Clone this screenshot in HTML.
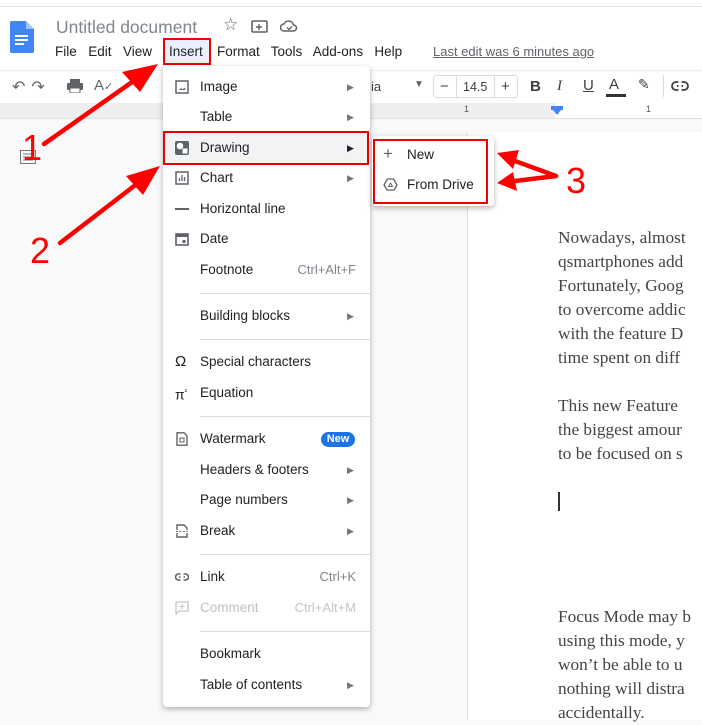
<!DOCTYPE html>
<html><head><meta charset="utf-8"><style>
*{margin:0;padding:0;box-sizing:border-box}
body{width:702px;height:720px;overflow:hidden;position:relative;background:#f8f9fa;font-family:"Liberation Sans",Arial,sans-serif;color:#3c4043}
.abs{position:absolute}
.menuitem{position:absolute;left:0;width:207px;height:30px;font-size:13.5px;line-height:30px;color:#202124}
.menuitem .t{position:absolute;left:37px}
.menuitem .ar{position:absolute;left:184px;font-size:9px;color:#777}
.menuitem .sc{position:absolute;right:14px;color:#80868b;font-size:13px}
.menuitem .ic{position:absolute;left:12px;top:8px;width:14px;height:14px}
.sep{position:absolute;left:37px;width:170px;height:1px;background:#dadce0}
.doc{position:absolute;left:558px;font-family:"Liberation Serif",Georgia,serif;font-size:17.3px;line-height:24px;color:#444;white-space:nowrap}
</style></head><body>
<div class="abs" style="left:0;top:0;width:702px;height:70px;background:#fff"></div>
<div class="abs" style="left:0;top:6px;width:702px;height:1px;background:#e5e5e5"></div>
<svg class="abs" style="left:10px;top:21px" width="24" height="32" viewBox="0 0 24 32"><path d="M2 0h14l8 8v22a2 2 0 0 1-2 2H2a2 2 0 0 1-2-2V2a2 2 0 0 1 2-2z" fill="#4285f4"/><path d="M16 0v8h8z" fill="#a1c2fa"/><rect x="5" y="14" width="13" height="2" fill="#fff"/><rect x="5" y="18" width="13" height="2" fill="#fff"/><rect x="5" y="22" width="9" height="2" fill="#fff"/></svg>
<div class="abs" style="left:56px;top:17px;font-size:17.5px;color:#80868b">Untitled document</div>
<div class="abs" style="left:223px;top:15px;font-size:17px;color:#5f6368">☆</div>
<svg class="abs" style="left:251px;top:19px" width="17" height="14"><rect x="1" y="2" width="15" height="11" rx="1" fill="none" stroke="#5f6368" stroke-width="1.6"/><path d="M8 5v6M5 8h6" stroke="#5f6368" stroke-width="1.4"/></svg>
<svg class="abs" style="left:280px;top:19px" width="18" height="14"><path d="M4 12a3.5 3.5 0 0 1 0-7 5 5 0 0 1 9.5 1 3 3 0 0 1 0 6z" fill="none" stroke="#5f6368" stroke-width="1.5"/><path d="M7 8.5l2 2 3-3" fill="none" stroke="#5f6368" stroke-width="1.3"/></svg>
<div class="abs" style="left:55px;top:44px;font-size:13.5px;color:#202124;word-spacing:2px">File&nbsp; Edit&nbsp; View</div>
<div class="abs" style="left:163px;top:38px;width:48px;height:27px;background:#e8f0fe;border:2px solid #e00"></div>
<div class="abs" style="left:169px;top:44px;font-size:13.5px;color:#202124">Insert</div>
<div class="abs" style="left:217px;top:44px;font-size:13.5px;color:#202124">Format&nbsp;&nbsp; Tools&nbsp;&nbsp; Add-ons&nbsp;&nbsp; Help</div>
<div class="abs" style="left:433px;top:44px;font-size:13px;color:#5f6368;text-decoration:underline">Last edit was 6 minutes ago</div>
<div class="abs" style="left:0;top:70px;width:702px;height:33px;background:#fff;border-top:1px solid #eee"></div>
<div class="abs" style="left:12px;top:77px;font-size:16px;color:#5f6368;letter-spacing:6px">↶↷</div>
<svg class="abs" style="left:67px;top:79px" width="16" height="14"><rect x="3" y="0" width="10" height="4" fill="#5f6368"/><rect x="0" y="4" width="16" height="7" rx="1" fill="#5f6368"/><rect x="3" y="9" width="10" height="5" fill="#fff" stroke="#5f6368"/></svg>
<div class="abs" style="left:94px;top:77px;font-size:15px;color:#5f6368">A<span style="font-size:11px">✓</span></div>
<div class="abs" style="left:371px;top:79px;font-size:13px;color:#3c4043">ia</div>
<div class="abs" style="left:414px;top:79px;font-size:10px;color:#5f6368">▼</div>
<div class="abs" style="left:433px;top:75px;width:85px;height:23px;border:1px solid #dadce0;border-radius:3px"></div>
<div class="abs" style="left:456px;top:75px;width:1px;height:23px;background:#dadce0"></div>
<div class="abs" style="left:494px;top:75px;width:1px;height:23px;background:#dadce0"></div>
<div class="abs" style="left:440px;top:78px;font-size:15px;color:#3c4043">−</div>
<div class="abs" style="left:463px;top:80px;font-size:12.5px;color:#3c4043">14.5</div>
<div class="abs" style="left:501px;top:78px;font-size:15px;color:#3c4043">+</div>
<div class="abs" style="left:530px;top:78px;font-size:15px;font-weight:bold;color:#3c4043">B</div>
<div class="abs" style="left:557px;top:78px;font-size:15px;font-style:italic;color:#3c4043;font-family:'Liberation Serif',serif">I</div>
<div class="abs" style="left:583px;top:77px;font-size:15px;color:#3c4043;text-decoration:underline">U</div>
<div class="abs" style="left:609px;top:76px;font-size:15px;color:#3c4043">A</div>
<div class="abs" style="left:606px;top:94px;width:20px;height:3px;background:#333"></div>
<div class="abs" style="left:638px;top:76px;font-size:14px;color:#3c4043">✎</div>
<div class="abs" style="left:663px;top:75px;width:1px;height:22px;background:#dadce0"></div>
<svg class="abs" style="left:671px;top:81px" width="18" height="10"><rect x="1" y="1" width="16" height="8" rx="4" fill="none" stroke="#3c4043" stroke-width="1.8"/><rect x="6" y="4" width="6" height="2" fill="#3c4043"/><rect x="7.5" y="0" width="3" height="10" fill="#fff"/></svg>
<div class="abs" style="left:0;top:103px;width:702px;height:15px;background:#eceeef"></div>
<div class="abs" style="left:555px;top:103px;width:147px;height:15px;background:#fff"></div>
<div class="abs" style="left:464px;top:104px;font-size:9px;color:#555">1</div>
<div class="abs" style="left:646px;top:104px;font-size:9px;color:#555">1</div>
<div class="abs" style="left:551px;top:106px;width:12px;height:4px;background:#4285f4"></div>
<div class="abs" style="left:553px;top:110px;width:0;height:0;border-left:4px solid transparent;border-right:4px solid transparent;border-top:5px solid #4285f4"></div>
<div class="abs" style="left:0;top:118px;width:702px;height:1px;background:#e0e0e0"></div>
<div class="abs" style="left:467px;top:132px;width:235px;height:588px;background:#fff;border-left:1px solid #e2e2e2"></div>
<svg class="abs" style="left:20px;top:150px" width="16" height="14"><rect x="0.5" y="0.5" width="15" height="13" fill="none" stroke="#777"/><path d="M3 4h10M3 7h10M3 10h10" stroke="#777"/></svg>
<div class="doc" style="top:226px">Nowadays, almost<br>qsmartphones add<br>Fortunately, Goog<br>to overcome addic<br>with the feature D<br>time spent on diff</div>
<div class="doc" style="top:394px">This new Feature<br>the biggest amour<br>to be focused on s</div>
<div class="abs" style="left:558px;top:492px;width:2px;height:19px;background:#333"></div>
<div class="doc" style="top:605px">Focus Mode may b<br>using this mode, y<br>won’t be able to u<br>nothing will distra<br>accidentally.</div>
<div class="abs" style="left:163px;top:66px;width:207px;height:641px;background:#fff;box-shadow:0 2px 6px rgba(0,0,0,.3);border-radius:4px">
 <div class="menuitem" style="top:6px"><svg class="ic"><rect x="1" y="1" width="12" height="12" fill="none" stroke="#5f6368" stroke-width="1.5"/><path d="M4 10l2-2 1.5 1.5 2-2 1 2.5z" fill="#5f6368"/></svg><span class="t">Image</span><span class="ar">▶</span></div>
 <div class="menuitem" style="top:36px"><span class="t">Table</span><span class="ar">▶</span></div>
 <div class="menuitem" style="top:67px;background:#f1f3f4"><svg class="ic"><rect x="0" y="0" width="14" height="14" rx="2" fill="#5f6368"/><circle cx="5" cy="5" r="3.3" fill="#fff"/><rect x="7.5" y="7.5" width="5" height="5" fill="#fff"/></svg><span class="t">Drawing</span><span class="ar" style="color:#202124">▶</span></div>
 <div class="menuitem" style="top:97px"><svg class="ic"><rect x="1" y="1" width="12" height="12" fill="none" stroke="#5f6368" stroke-width="1.5"/><path d="M4.5 10V7M7 10V4M9.5 10V6" stroke="#5f6368" stroke-width="1.3"/></svg><span class="t">Chart</span><span class="ar">▶</span></div>
 <div class="menuitem" style="top:128px"><svg class="ic"><path d="M0 7h14" stroke="#5f6368" stroke-width="2"/></svg><span class="t">Horizontal line</span></div>
 <div class="menuitem" style="top:158px"><svg class="ic"><rect x="1" y="2" width="12" height="11" fill="none" stroke="#5f6368" stroke-width="1.6"/><rect x="1" y="2" width="12" height="3" fill="#5f6368"/><rect x="7.5" y="8" width="3" height="3" fill="#5f6368"/></svg><span class="t">Date</span></div>
 <div class="menuitem" style="top:189px"><span class="t">Footnote</span><span class="sc">Ctrl+Alt+F</span></div>
 <div class="sep" style="top:227px"></div>
 <div class="menuitem" style="top:235px"><span class="t">Building blocks</span><span class="ar">▶</span></div>
 <div class="sep" style="top:273px"></div>
 <div class="menuitem" style="top:281px"><span class="t" style="left:12px;font-size:15px">Ω</span><span class="t">Special characters</span></div>
 <div class="menuitem" style="top:312px"><span class="t" style="left:12px;font-size:14px">π<sup style="font-size:7px">²</sup></span><span class="t">Equation</span></div>
 <div class="sep" style="top:350px"></div>
 <div class="menuitem" style="top:358px"><svg class="ic"><path d="M2 0.8h7l3 3V13.2H2z" fill="none" stroke="#5f6368" stroke-width="1.4"/><rect x="5" y="6" width="4" height="4" fill="none" stroke="#5f6368"/></svg><span class="t">Watermark</span><span class="abs" style="left:158px;top:8px;width:34px;height:15px;background:#1a73e8;border-radius:8px;color:#fff;font-size:11px;font-weight:bold;line-height:15px;text-align:center">New</span></div>
 <div class="menuitem" style="top:389px"><span class="t">Headers &amp; footers</span><span class="ar">▶</span></div>
 <div class="menuitem" style="top:419px"><span class="t">Page numbers</span><span class="ar">▶</span></div>
 <div class="menuitem" style="top:450px"><svg class="ic"><path d="M2 6V1h7l3 3v2M2 9v4h10V9" fill="none" stroke="#5f6368" stroke-width="1.4"/><path d="M1 7.5h12" stroke="#5f6368" stroke-dasharray="2 1.5"/></svg><span class="t">Break</span><span class="ar">▶</span></div>
 <div class="sep" style="top:488px"></div>
 <div class="menuitem" style="top:496px"><svg class="ic"><rect x="0.5" y="4" width="13" height="6" rx="3" fill="none" stroke="#5f6368" stroke-width="1.6"/><rect x="4" y="6.2" width="6" height="1.6" fill="#5f6368"/><rect x="5.5" y="3" width="3" height="8" fill="#fff"/></svg><span class="t">Link</span><span class="sc">Ctrl+K</span></div>
 <div class="menuitem" style="top:527px;color:#bdc1c6"><svg class="ic"><path d="M1 1h12v9H4l-3 3z" fill="none" stroke="#c4c7c5" stroke-width="1.3"/><path d="M7 3v5M4.5 5.5h5" stroke="#c4c7c5"/></svg><span class="t">Comment</span><span class="sc" style="color:#c4c7c5">Ctrl+Alt+M</span></div>
 <div class="sep" style="top:565px"></div>
 <div class="menuitem" style="top:573px"><span class="t">Bookmark</span></div>
 <div class="menuitem" style="top:604px"><span class="t">Table of contents</span><span class="ar">▶</span></div>
</div>
<div class="abs" style="left:163px;top:131px;width:206px;height:34px;border:2px solid #e00"></div>
<div class="abs" style="left:372px;top:136px;width:122px;height:70px;background:#fff;box-shadow:0 2px 6px rgba(0,0,0,.3);border-radius:4px"></div>
<div class="abs" style="left:373px;top:139px;width:115px;height:65px;border:2px solid #e00"></div>
<div class="abs" style="left:383px;top:144px;font-size:17px;color:#5f6368">+</div>
<div class="abs" style="left:407px;top:147px;font-size:13.5px;color:#202124">New</div>
<svg class="abs" style="left:383px;top:178px" width="15" height="13"><path d="M4.5 1h6l3.5 6-3 5H4l-3-5z" fill="none" stroke="#5f6368" stroke-width="1.3" stroke-linejoin="round"/><path d="M7.5 5l-2 3.5h4z" fill="none" stroke="#5f6368" stroke-width="1"/></svg>
<div class="abs" style="left:407px;top:177px;font-size:13.5px;color:#202124">From Drive</div>
<svg class="abs" style="left:0;top:0" width="702" height="720">
<g stroke="#f00" stroke-width="4.5" stroke-linecap="round" fill="none">
<line x1="44" y1="144" x2="135" y2="80"/>
<line x1="60" y1="243" x2="138" y2="183"/>
<line x1="556" y1="176" x2="515" y2="161"/>
<line x1="556" y1="176" x2="515" y2="181"/>
</g>
<g fill="#f00">
<polygon points="158,64 122,72 140,92"/>
<polygon points="160,166 126,176 143,195"/>
<polygon points="497,153 519,150 513,169"/>
<polygon points="497,183 513,172 517,191"/>
</g>
<g fill="#f00" font-family="Liberation Sans,sans-serif" font-size="36">
<text x="22" y="160">1</text><text x="30" y="263">2</text><text x="566" y="193">3</text>
</g>
</svg>
</body></html>
